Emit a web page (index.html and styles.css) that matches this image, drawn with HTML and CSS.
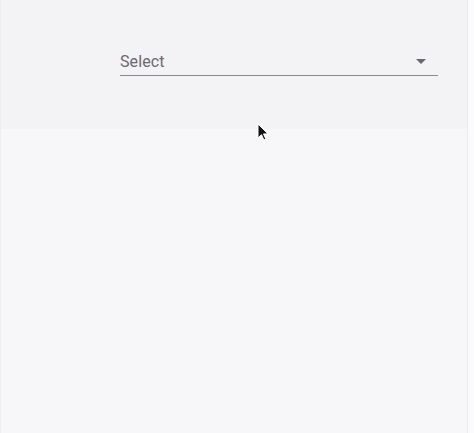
FILE: index.html
```html
<!DOCTYPE html>
<html>
<head>
<meta charset="utf-8">
<link rel="stylesheet" href="styles.css">
</head>
<body>
<div class="app">
  <header class="panel">
    <div class="select">
      <span class="label">Select</span>
      <svg class="arrow" width="10" height="5" viewBox="0 0 10 5"><path d="M0 0h10L5 5z" fill="#6a6770"/></svg>
    </div>
  </header>
  <main class="body"></main>
  <svg class="cursor" width="12" height="18" viewBox="0 0 12 18"><path d="M1 1v14l3.5-3.3 2.4 5.3 2-0.9-2.4-5.2H11z" fill="#111" stroke="#fff" stroke-width="1"/></svg>
</div>
</body>
</html>
```
FILE: styles.css
```css
html, body { margin: 0; padding: 0; }
body {
  background: #fbfafc;
  font-family: Roboto, "Noto Sans", sans-serif;
}
.app {
  position: relative;
  width: 468px;
  height: 433px;
  display: flex;
  flex-direction: column;
  border-left: 1px solid #eeedf0;
  border-right: 1px solid #ebeaee;
  box-sizing: border-box;
}
.panel {
  height: 129px;
  background: #f3f2f5;
  padding: 47px 29px 0 119px;
  box-sizing: border-box;
}
.select {
  display: flex;
  align-items: center;
  justify-content: space-between;
  height: 29px;
  border-bottom: 1px solid #8c8991;
  padding-right: 12px;
  box-sizing: border-box;
}
.label {
  font-size: 16px;
  color: #6b6870;
  letter-spacing: 0.1px;
  margin-top: 0;
}
.arrow { display: block; margin-top: 0; }
.body {
  flex: 1;
  background: #f7f6f9;
}
.cursor {
  position: absolute;
  left: 256px;
  top: 123px;
}
```
